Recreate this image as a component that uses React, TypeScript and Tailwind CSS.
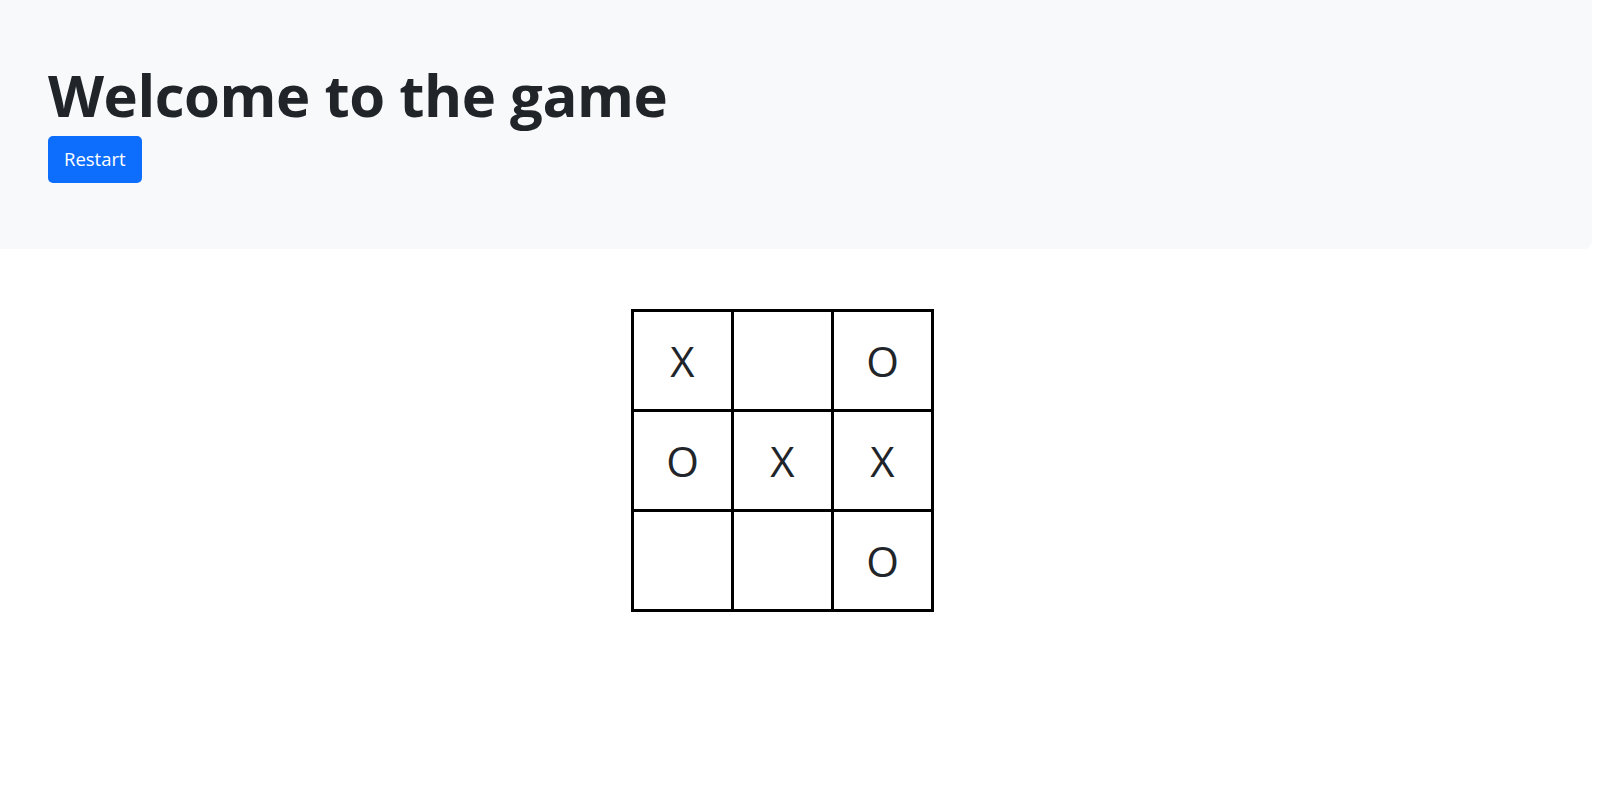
const BOARD: string[] = ["X", "", "O", "O", "X", "X", "", "", "O"];

export default function App() {
  return (
    <div className="min-h-[800px] bg-white font-['Open_Sans',sans-serif] text-[#212529]">
      <header className="w-[1592px] h-[249px] bg-[#f8f9fa] rounded-br-lg pl-[48px] pt-[60px]">
        <h1 className="text-[58px] font-bold leading-[1.2] tracking-[-0.45px]">
          Welcome to the game
        </h1>
        <button
          type="button"
          className="mt-[6px] h-[47px] px-[16px] rounded-[5px] bg-[#0d6efd] text-white text-[18.5px] leading-none"
        >
          Restart
        </button>
      </header>

      <div className="ml-[631px] mt-[60px] w-[303px] grid grid-cols-3 border-r-[3px] border-b-[3px] border-black">
        {BOARD.map((cell, i) => (
          <div
            key={i}
            className="h-[100px] border-l-[3px] border-t-[3px] border-black flex items-center justify-center text-[42px] font-normal"
          >
            {cell}
          </div>
        ))}
      </div>
    </div>
  );
}
